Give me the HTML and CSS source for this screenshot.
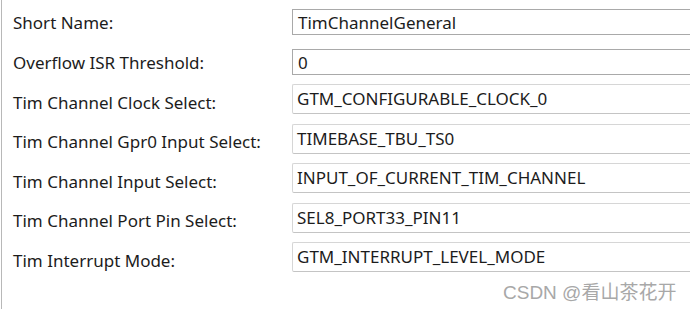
FILE: index.html
```html
<!DOCTYPE html>
<html>
<head>
<meta charset="utf-8">
<link rel="stylesheet" href="styles.css">
</head>
<body>
<div class="panel">
  <div class="row text-row first">
    <div class="label">Short Name:</div>
    <div class="field text">TimChannelGeneral</div>
  </div>
  <div class="row text-row second">
    <div class="label">Overflow ISR Threshold:</div>
    <div class="field text">0</div>
  </div>
  <div class="row combo-row">
    <div class="label">Tim Channel Clock Select:</div>
    <div class="field combo">GTM_CONFIGURABLE_CLOCK_0</div>
  </div>
  <div class="row combo-row">
    <div class="label">Tim Channel Gpr0 Input Select:</div>
    <div class="field combo">TIMEBASE_TBU_TS0</div>
  </div>
  <div class="row combo-row">
    <div class="label">Tim Channel Input Select:</div>
    <div class="field combo">INPUT_OF_CURRENT_TIM_CHANNEL</div>
  </div>
  <div class="row combo-row">
    <div class="label">Tim Channel Port Pin Select:</div>
    <div class="field combo">SEL8_PORT33_PIN11</div>
  </div>
  <div class="row combo-row">
    <div class="label">Tim Interrupt Mode:</div>
    <div class="field combo">GTM_INTERRUPT_LEVEL_MODE</div>
  </div>
</div>
<div class="watermark">CSDN @看山茶花开</div>
</body>
</html>
```

FILE: styles.css
```css
html, body {
  margin: 0;
  padding: 0;
  background: #ffffff;
  width: 690px;
  height: 309px;
  overflow: hidden;
}
body {
  position: relative;
  font-family: "Noto Sans", "Open Sans", "Noto Sans CJK SC", sans-serif;
  font-size: 17px;
  color: #1c1c1c;
}
.panel {
  margin-left: 1px;
  border-left: 1px solid #b8b8b8;
  height: 309px;
  box-sizing: border-box;
  padding-top: 9px;
  display: flex;
  flex-direction: column;
}
.row {
  display: flex;
  align-items: center;
}
.label {
  width: 290px;
  flex: none;
  padding-left: 11px;
  box-sizing: border-box;
  white-space: nowrap;
}
.field {
  flex: none;
  width: 420px;
  box-sizing: border-box;
  white-space: nowrap;
  display: flex;
  align-items: center;
}
.text {
  height: 26px;
  border: 1px solid #a9a9a9;
  border-right: none;
  padding-left: 5px;
}
.first { margin-bottom: 14px; }
.second { margin-bottom: 9px; }
.combo-row { margin-bottom: 9.5px; }
.combo-row .label { padding-top: 6px; }
.combo {
  height: 30px;
  border: 1px solid #d6d6d6;
  border-bottom-color: #c4c4c4;
  border-right: none;
  border-radius: 2px 0 0 2px;
  padding-left: 4px;
  padding-bottom: 1px;
}
.watermark {
  position: absolute;
  left: 503px;
  top: 277px;
  font-family: "Liberation Sans", "Noto Sans CJK SC", sans-serif;
  font-size: 19px;
  color: #a8a8a8;
  white-space: nowrap;
}
```
